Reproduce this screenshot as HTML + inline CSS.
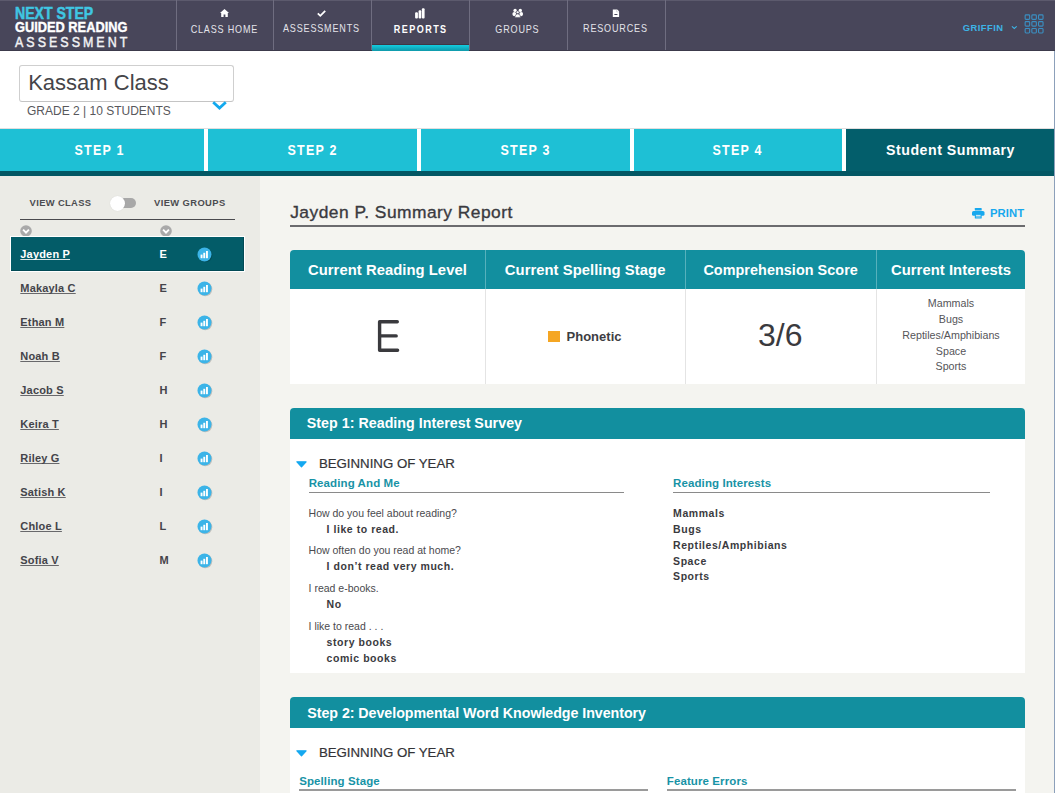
<!DOCTYPE html>
<html><head><meta charset="utf-8">
<style>
*{box-sizing:border-box;margin:0;padding:0}
html,body{width:1055px;height:793px;overflow:hidden;background:#f4f4f0;font-family:"Liberation Sans",sans-serif;color:#3b3b3f}
.a{position:absolute;white-space:nowrap}
svg{position:absolute;overflow:visible}
</style></head><body>
<div class="a" style="left:0px;top:0px;width:1055px;height:51px;background:#48465a;"></div>
<div class="a" style="left:0px;top:0px;width:1055px;height:1px;background:#5c5a6d;"></div>
<div class="a" style="left:15px;top:4.63px;font-size:16.2px;line-height:16.2px;font-weight:bold;color:#3fc6e2;transform:scaleX(0.87);transform-origin:left top;-webkit-text-stroke:0.5px #3fc6e2;">NEXT STEP</div>
<div class="a" style="left:15px;top:20.13px;font-size:14.9px;line-height:14.9px;font-weight:bold;color:#ffffff;transform:scaleX(0.86);transform-origin:left top;-webkit-text-stroke:0.4px #fff;">GUIDED READING</div>
<div class="a" style="left:15px;top:34.67px;font-size:14.5px;line-height:14.5px;font-weight:normal;color:#f2f2f4;letter-spacing:3.5px;transform:scaleX(0.86);transform-origin:left top;-webkit-text-stroke:0.45px #f2f2f4;">ASSESSMENT</div>
<div class="a" style="left:176px;top:0px;width:1px;height:51px;background:#6f6d80;"></div>
<div class="a" style="left:23.900000000000006px;width:400px;text-align:center;top:24.76px;font-size:10.4px;line-height:10.4px;font-weight:normal;color:#e4e4ea;letter-spacing:0.95px;text-indent:0.95px;transform:scaleX(0.87);transform-origin:center top;">CLASS HOME</div>
<div class="a" style="left:273px;top:0px;width:1px;height:51px;background:#6f6d80;"></div>
<div class="a" style="left:121.39999999999998px;width:400px;text-align:center;top:24.16px;font-size:10.4px;line-height:10.4px;font-weight:normal;color:#e4e4ea;letter-spacing:0.95px;text-indent:0.95px;transform:scaleX(0.87);transform-origin:center top;">ASSESSMENTS</div>
<div class="a" style="left:371px;top:0px;width:1px;height:51px;background:#6f6d80;"></div>
<div class="a" style="left:219.7px;width:400px;text-align:center;top:24.76px;font-size:10.4px;line-height:10.4px;font-weight:bold;color:#ffffff;letter-spacing:1.65px;text-indent:1.65px;transform:scaleX(0.87);transform-origin:center top;">REPORTS</div>
<div class="a" style="left:469px;top:0px;width:1px;height:51px;background:#6f6d80;"></div>
<div class="a" style="left:317.4px;width:400px;text-align:center;top:24.76px;font-size:10.4px;line-height:10.4px;font-weight:normal;color:#e4e4ea;letter-spacing:0.95px;text-indent:0.95px;transform:scaleX(0.87);transform-origin:center top;">GROUPS</div>
<div class="a" style="left:567px;top:0px;width:1px;height:51px;background:#6f6d80;"></div>
<div class="a" style="left:415.4px;width:400px;text-align:center;top:24.16px;font-size:10.4px;line-height:10.4px;font-weight:normal;color:#e4e4ea;letter-spacing:0.95px;text-indent:0.95px;transform:scaleX(0.87);transform-origin:center top;">RESOURCES</div>
<div class="a" style="left:665px;top:0px;width:1px;height:51px;background:#6f6d80;"></div>
<div class="a" style="left:0px;top:50px;width:1055px;height:1px;background:#3c3a4b;"></div>
<div class="a" style="left:372px;top:44px;width:97px;height:1px;background:#3e3744;"></div>
<div class="a" style="left:372px;top:45px;width:97px;height:6.5px;background:linear-gradient(#14cde0,#10a6b8 60%,#0e93a4);"></div>
<svg style="left:220px;top:9px" width="9" height="8" viewBox="0 0 9 8"><path d="M4.5 0 L9 4 L7.8 4 L7.8 8 L5.4 8 L5.4 5.6 L3.6 5.6 L3.6 8 L1.2 8 L1.2 4 L0 4 Z" fill="#fff"/></svg>
<svg style="left:317px;top:10px" width="9" height="7" viewBox="0 0 9 7"><path d="M0.8 3.4 L3.3 5.8 L8.2 0.8" stroke="#fff" stroke-width="1.8" fill="none"/></svg>
<svg style="left:415px;top:7.5px" width="10" height="11" viewBox="0 0 10 11"><rect x="0.1" y="4.3" width="2.8" height="6.3" rx="1" fill="#fff"/><rect x="3.6" y="2.2" width="2.7" height="8.4" rx="1" fill="#fff"/><rect x="6.9" y="0.2" width="2.7" height="10.4" rx="1" fill="#fff"/></svg>
<svg style="left:510px;top:7px" width="15" height="12" viewBox="510 7 15 12"><circle cx="515.1" cy="10.4" r="1.7" fill="#fff"/><circle cx="520.3" cy="10.4" r="1.7" fill="#fff"/><ellipse cx="514.3" cy="14.1" rx="1.9" ry="2.1" fill="#fff"/><ellipse cx="521.2" cy="14.1" rx="1.9" ry="2.1" fill="#fff"/><circle cx="517.7" cy="12.3" r="1.4" fill="#fff" stroke="#48465a" stroke-width="0.5"/><path d="M514.9 17.4 Q514.9 13.9 517.7 13.9 Q520.5 13.9 520.5 17.4 Z" fill="#fff" stroke="#48465a" stroke-width="0.5"/></svg>
<svg style="left:612px;top:9px" width="8" height="9" viewBox="612 9 8 9"><path d="M612.8 9.4 H617.2 L619.1 11.3 V17.1 H612.8 Z" fill="#fff"/><path d="M616.6 9.6 V11.9 H618.9" stroke="#b9b8c2" stroke-width="0.5" fill="none"/><rect x="614.2" y="14" width="3.4" height="0.9" rx="0.4" fill="#48465a"/></svg>
<div class="a" style="left:962.7px;top:22.71px;font-size:9.4px;line-height:9.4px;font-weight:bold;color:#3db3e6;letter-spacing:0.48px;">GRIFFIN</div>
<svg style="left:1010px;top:24px" width="9" height="7" viewBox="1010 24 9 7"><path d="M1011.9 26.4 L1014.3 28.5 L1016.7 26.4" stroke="#3db3e6" stroke-width="1.1" fill="none"/></svg>
<svg style="left:1020px;top:10px" width="30" height="30" viewBox="1020 10 30 30"><rect x="1025.15" y="14.85" width="4.5" height="4.5" rx="0.9" fill="none" stroke="#3a8fc2" stroke-width="1.1"/><rect x="1031.85" y="14.85" width="4.5" height="4.5" rx="0.9" fill="none" stroke="#3a8fc2" stroke-width="1.1"/><rect x="1038.55" y="14.85" width="4.5" height="4.5" rx="0.9" fill="none" stroke="#3a8fc2" stroke-width="1.1"/><rect x="1025.15" y="21.65" width="4.5" height="4.5" rx="0.9" fill="none" stroke="#3a8fc2" stroke-width="1.1"/><rect x="1031.85" y="21.65" width="4.5" height="4.5" rx="0.9" fill="none" stroke="#3a8fc2" stroke-width="1.1"/><rect x="1038.55" y="21.65" width="4.5" height="4.5" rx="0.9" fill="none" stroke="#3a8fc2" stroke-width="1.1"/><rect x="1025.15" y="28.45" width="4.5" height="4.5" rx="0.9" fill="none" stroke="#3a8fc2" stroke-width="1.1"/><rect x="1031.85" y="28.45" width="4.5" height="4.5" rx="0.9" fill="none" stroke="#3a8fc2" stroke-width="1.1"/><rect x="1038.55" y="28.45" width="4.5" height="4.5" rx="0.9" fill="none" stroke="#3a8fc2" stroke-width="1.1"/></svg>
<div class="a" style="left:0px;top:51px;width:1055px;height:77px;background:#ffffff;"></div>
<div class="a" style="left:0px;top:128px;width:1055px;height:1px;background:#e2dede;"></div>
<div class="a" style="left:19px;top:65px;width:215px;height:36.8px;background:#ffffff;border:1px solid #cfcfcf;border-bottom-color:#c4c4c4;border-radius:3px;"></div>
<div class="a" style="left:28.2px;top:72.00px;font-size:22px;line-height:22px;font-weight:normal;color:#454549;">Kassam Class</div>
<div class="a" style="left:27px;top:105.10px;font-size:12px;line-height:12px;font-weight:normal;color:#58585c;">GRADE 2 | 10 STUDENTS</div>
<svg style="left:212px;top:101px" width="15" height="9" viewBox="0 0 15 9"><path d="M1.2 1.2 L7.5 7 L13.8 1.2" stroke="#12a9ee" stroke-width="2.8" fill="none"/></svg>
<div class="a" style="left:0px;top:129px;width:1055px;height:47px;background:#035764;"></div>
<div class="a" style="left:0px;top:129px;width:204px;height:42px;background:#1ec0d5;"></div>
<div class="a" style="left:-101.0px;width:400px;text-align:center;top:143.43px;font-size:14.2px;line-height:14.2px;font-weight:bold;color:#ffffff;letter-spacing:1.4px;text-indent:1.4px;transform:scaleX(0.88);transform-origin:center top;">STEP 1</div>
<div class="a" style="left:208px;top:129px;width:209px;height:42px;background:#1ec0d5;"></div>
<div class="a" style="left:111.80000000000001px;width:400px;text-align:center;top:143.43px;font-size:14.2px;line-height:14.2px;font-weight:bold;color:#ffffff;letter-spacing:1.4px;text-indent:1.4px;transform:scaleX(0.88);transform-origin:center top;">STEP 2</div>
<div class="a" style="left:421px;top:129px;width:209px;height:42px;background:#1ec0d5;"></div>
<div class="a" style="left:324.6px;width:400px;text-align:center;top:143.43px;font-size:14.2px;line-height:14.2px;font-weight:bold;color:#ffffff;letter-spacing:1.4px;text-indent:1.4px;transform:scaleX(0.88);transform-origin:center top;">STEP 3</div>
<div class="a" style="left:633px;top:129px;width:209px;height:42px;background:#1ec0d5;"></div>
<div class="a" style="left:537.4px;width:400px;text-align:center;top:143.43px;font-size:14.2px;line-height:14.2px;font-weight:bold;color:#ffffff;letter-spacing:1.4px;text-indent:1.4px;transform:scaleX(0.88);transform-origin:center top;">STEP 4</div>
<div class="a" style="left:846px;top:129px;width:209px;height:42px;background:#035e6b;"></div>
<div class="a" style="left:750.3px;width:400px;text-align:center;top:143.43px;font-size:14.2px;line-height:14.2px;font-weight:bold;color:#ffffff;letter-spacing:0.5px;text-indent:0.5px;">Student Summary</div>
<div class="a" style="left:204px;top:129px;width:4px;height:42px;background:#ffffff;"></div>
<div class="a" style="left:417px;top:129px;width:4px;height:42px;background:#ffffff;"></div>
<div class="a" style="left:630px;top:129px;width:4px;height:42px;background:#ffffff;"></div>
<div class="a" style="left:842px;top:129px;width:4px;height:42px;background:#ffffff;"></div>
<div class="a" style="left:0px;top:176px;width:260px;height:617px;background:#ebebe6;"></div>
<div class="a" style="left:29.6px;top:198.01px;font-size:9.4px;line-height:9.4px;font-weight:bold;color:#4b4b50;letter-spacing:0.35px;">VIEW CLASS</div>
<div class="a" style="left:154px;top:198.01px;font-size:9.4px;line-height:9.4px;font-weight:bold;color:#4b4b50;letter-spacing:0.4px;">VIEW GROUPS</div>
<div class="a" style="left:111px;top:198px;width:25px;height:10px;background:#a8a8a8;border-radius:5px;"></div>
<div class="a" style="left:109.5px;top:195.5px;width:15px;height:15px;background:#ffffff;border-radius:50%;box-shadow:0 0 1px rgba(0,0,0,.15);"></div>
<div class="a" style="left:20px;top:219px;width:215px;height:1px;background:#4a4a4e;"></div>
<svg style="left:20px;top:225px" width="12" height="12" viewBox="0 0 12 12"><circle cx="6" cy="6" r="5.8" fill="#a9a9a9"/><path d="M3.1 4.7 L6 7.6 L8.9 4.7" stroke="#fff" stroke-width="1.9" fill="none"/></svg>
<svg style="left:159.5px;top:225px" width="12" height="12" viewBox="0 0 12 12"><circle cx="6" cy="6" r="5.8" fill="#a9a9a9"/><path d="M3.1 4.7 L6 7.6 L8.9 4.7" stroke="#fff" stroke-width="1.9" fill="none"/></svg>
<div class="a" style="left:10px;top:236px;width:235px;height:36px;background:#ffffff;"></div>
<div class="a" style="left:11px;top:237px;width:233px;height:34px;background:#035c68;box-shadow:inset -1px -1px 0 #024a55;"></div>
<div class="a" style="left:20.3px;top:248.55px;font-size:11px;line-height:11px;font-weight:bold;color:#ffffff;letter-spacing:0.18px;text-decoration:underline;text-underline-offset:1px;text-decoration-thickness:1px;text-decoration-skip-ink:none;text-decoration-color:rgba(255,255,255,.85);">Jayden P</div>
<div class="a" style="left:159.5px;top:248.55px;font-size:11px;line-height:11px;font-weight:bold;color:#ffffff;">E</div>
<svg style="left:196.5px;top:246.8px" width="16" height="16" viewBox="0 0 16 16"><circle cx="8.3" cy="8.3" r="7" fill="rgba(0,0,0,0.18)"/><circle cx="7.5" cy="7.5" r="7" fill="#3cb4e8"/><rect x="3.6" y="7.6" width="1.9" height="3.6" fill="#fff"/><rect x="6.3" y="5.8" width="1.9" height="5.4" fill="#fff"/><rect x="9" y="4" width="1.9" height="7.2" fill="#fff"/></svg>
<div class="a" style="left:20.3px;top:282.55px;font-size:11px;line-height:11px;font-weight:bold;color:#44444a;letter-spacing:0.18px;text-decoration:underline;text-underline-offset:1px;text-decoration-thickness:1px;text-decoration-skip-ink:none;text-decoration-color:rgba(60,60,66,.75);">Makayla C</div>
<div class="a" style="left:159.5px;top:282.55px;font-size:11px;line-height:11px;font-weight:bold;color:#44444a;">E</div>
<svg style="left:196.5px;top:280.8px" width="16" height="16" viewBox="0 0 16 16"><circle cx="8.3" cy="8.3" r="7" fill="rgba(0,0,0,0.18)"/><circle cx="7.5" cy="7.5" r="7" fill="#3cb4e8"/><rect x="3.6" y="7.6" width="1.9" height="3.6" fill="#fff"/><rect x="6.3" y="5.8" width="1.9" height="5.4" fill="#fff"/><rect x="9" y="4" width="1.9" height="7.2" fill="#fff"/></svg>
<div class="a" style="left:20.3px;top:316.55px;font-size:11px;line-height:11px;font-weight:bold;color:#44444a;letter-spacing:0.18px;text-decoration:underline;text-underline-offset:1px;text-decoration-thickness:1px;text-decoration-skip-ink:none;text-decoration-color:rgba(60,60,66,.75);">Ethan M</div>
<div class="a" style="left:159.5px;top:316.55px;font-size:11px;line-height:11px;font-weight:bold;color:#44444a;">F</div>
<svg style="left:196.5px;top:314.8px" width="16" height="16" viewBox="0 0 16 16"><circle cx="8.3" cy="8.3" r="7" fill="rgba(0,0,0,0.18)"/><circle cx="7.5" cy="7.5" r="7" fill="#3cb4e8"/><rect x="3.6" y="7.6" width="1.9" height="3.6" fill="#fff"/><rect x="6.3" y="5.8" width="1.9" height="5.4" fill="#fff"/><rect x="9" y="4" width="1.9" height="7.2" fill="#fff"/></svg>
<div class="a" style="left:20.3px;top:350.55px;font-size:11px;line-height:11px;font-weight:bold;color:#44444a;letter-spacing:0.18px;text-decoration:underline;text-underline-offset:1px;text-decoration-thickness:1px;text-decoration-skip-ink:none;text-decoration-color:rgba(60,60,66,.75);">Noah B</div>
<div class="a" style="left:159.5px;top:350.55px;font-size:11px;line-height:11px;font-weight:bold;color:#44444a;">F</div>
<svg style="left:196.5px;top:348.8px" width="16" height="16" viewBox="0 0 16 16"><circle cx="8.3" cy="8.3" r="7" fill="rgba(0,0,0,0.18)"/><circle cx="7.5" cy="7.5" r="7" fill="#3cb4e8"/><rect x="3.6" y="7.6" width="1.9" height="3.6" fill="#fff"/><rect x="6.3" y="5.8" width="1.9" height="5.4" fill="#fff"/><rect x="9" y="4" width="1.9" height="7.2" fill="#fff"/></svg>
<div class="a" style="left:20.3px;top:384.55px;font-size:11px;line-height:11px;font-weight:bold;color:#44444a;letter-spacing:0.18px;text-decoration:underline;text-underline-offset:1px;text-decoration-thickness:1px;text-decoration-skip-ink:none;text-decoration-color:rgba(60,60,66,.75);">Jacob S</div>
<div class="a" style="left:159.5px;top:384.55px;font-size:11px;line-height:11px;font-weight:bold;color:#44444a;">H</div>
<svg style="left:196.5px;top:382.8px" width="16" height="16" viewBox="0 0 16 16"><circle cx="8.3" cy="8.3" r="7" fill="rgba(0,0,0,0.18)"/><circle cx="7.5" cy="7.5" r="7" fill="#3cb4e8"/><rect x="3.6" y="7.6" width="1.9" height="3.6" fill="#fff"/><rect x="6.3" y="5.8" width="1.9" height="5.4" fill="#fff"/><rect x="9" y="4" width="1.9" height="7.2" fill="#fff"/></svg>
<div class="a" style="left:20.3px;top:418.55px;font-size:11px;line-height:11px;font-weight:bold;color:#44444a;letter-spacing:0.18px;text-decoration:underline;text-underline-offset:1px;text-decoration-thickness:1px;text-decoration-skip-ink:none;text-decoration-color:rgba(60,60,66,.75);">Keira T</div>
<div class="a" style="left:159.5px;top:418.55px;font-size:11px;line-height:11px;font-weight:bold;color:#44444a;">H</div>
<svg style="left:196.5px;top:416.8px" width="16" height="16" viewBox="0 0 16 16"><circle cx="8.3" cy="8.3" r="7" fill="rgba(0,0,0,0.18)"/><circle cx="7.5" cy="7.5" r="7" fill="#3cb4e8"/><rect x="3.6" y="7.6" width="1.9" height="3.6" fill="#fff"/><rect x="6.3" y="5.8" width="1.9" height="5.4" fill="#fff"/><rect x="9" y="4" width="1.9" height="7.2" fill="#fff"/></svg>
<div class="a" style="left:20.3px;top:452.55px;font-size:11px;line-height:11px;font-weight:bold;color:#44444a;letter-spacing:0.18px;text-decoration:underline;text-underline-offset:1px;text-decoration-thickness:1px;text-decoration-skip-ink:none;text-decoration-color:rgba(60,60,66,.75);">Riley G</div>
<div class="a" style="left:159.5px;top:452.55px;font-size:11px;line-height:11px;font-weight:bold;color:#44444a;">I</div>
<svg style="left:196.5px;top:450.8px" width="16" height="16" viewBox="0 0 16 16"><circle cx="8.3" cy="8.3" r="7" fill="rgba(0,0,0,0.18)"/><circle cx="7.5" cy="7.5" r="7" fill="#3cb4e8"/><rect x="3.6" y="7.6" width="1.9" height="3.6" fill="#fff"/><rect x="6.3" y="5.8" width="1.9" height="5.4" fill="#fff"/><rect x="9" y="4" width="1.9" height="7.2" fill="#fff"/></svg>
<div class="a" style="left:20.3px;top:486.55px;font-size:11px;line-height:11px;font-weight:bold;color:#44444a;letter-spacing:0.18px;text-decoration:underline;text-underline-offset:1px;text-decoration-thickness:1px;text-decoration-skip-ink:none;text-decoration-color:rgba(60,60,66,.75);">Satish K</div>
<div class="a" style="left:159.5px;top:486.55px;font-size:11px;line-height:11px;font-weight:bold;color:#44444a;">I</div>
<svg style="left:196.5px;top:484.8px" width="16" height="16" viewBox="0 0 16 16"><circle cx="8.3" cy="8.3" r="7" fill="rgba(0,0,0,0.18)"/><circle cx="7.5" cy="7.5" r="7" fill="#3cb4e8"/><rect x="3.6" y="7.6" width="1.9" height="3.6" fill="#fff"/><rect x="6.3" y="5.8" width="1.9" height="5.4" fill="#fff"/><rect x="9" y="4" width="1.9" height="7.2" fill="#fff"/></svg>
<div class="a" style="left:20.3px;top:520.55px;font-size:11px;line-height:11px;font-weight:bold;color:#44444a;letter-spacing:0.18px;text-decoration:underline;text-underline-offset:1px;text-decoration-thickness:1px;text-decoration-skip-ink:none;text-decoration-color:rgba(60,60,66,.75);">Chloe L</div>
<div class="a" style="left:159.5px;top:520.55px;font-size:11px;line-height:11px;font-weight:bold;color:#44444a;">L</div>
<svg style="left:196.5px;top:518.8px" width="16" height="16" viewBox="0 0 16 16"><circle cx="8.3" cy="8.3" r="7" fill="rgba(0,0,0,0.18)"/><circle cx="7.5" cy="7.5" r="7" fill="#3cb4e8"/><rect x="3.6" y="7.6" width="1.9" height="3.6" fill="#fff"/><rect x="6.3" y="5.8" width="1.9" height="5.4" fill="#fff"/><rect x="9" y="4" width="1.9" height="7.2" fill="#fff"/></svg>
<div class="a" style="left:20.3px;top:554.55px;font-size:11px;line-height:11px;font-weight:bold;color:#44444a;letter-spacing:0.18px;text-decoration:underline;text-underline-offset:1px;text-decoration-thickness:1px;text-decoration-skip-ink:none;text-decoration-color:rgba(60,60,66,.75);">Sofia V</div>
<div class="a" style="left:159.5px;top:554.55px;font-size:11px;line-height:11px;font-weight:bold;color:#44444a;">M</div>
<svg style="left:196.5px;top:552.8px" width="16" height="16" viewBox="0 0 16 16"><circle cx="8.3" cy="8.3" r="7" fill="rgba(0,0,0,0.18)"/><circle cx="7.5" cy="7.5" r="7" fill="#3cb4e8"/><rect x="3.6" y="7.6" width="1.9" height="3.6" fill="#fff"/><rect x="6.3" y="5.8" width="1.9" height="5.4" fill="#fff"/><rect x="9" y="4" width="1.9" height="7.2" fill="#fff"/></svg>
<div class="a" style="left:1054px;top:51px;width:1px;height:742px;background:#8ca0ba;"></div>
<div class="a" style="left:290.2px;top:203.81px;font-size:17.4px;line-height:17.4px;font-weight:normal;color:#3a3a3f;letter-spacing:0.47px;-webkit-text-stroke:0.35px #3a3a3f;">Jayden P. Summary Report</div>
<div class="a" style="left:290px;top:225px;width:735px;height:2px;background:#6b6b6e;"></div>
<div class="a" style="left:989.9px;top:207.90px;font-size:11.3px;line-height:11.3px;font-weight:bold;color:#17a8ee;letter-spacing:0.1px;">PRINT</div>
<svg style="left:971.7px;top:207.5px" width="12.5" height="10.6" viewBox="0 0 12.5 10.6"><rect x="2.8" y="0" width="6.9" height="2.5" rx="0.5" fill="#17a8ee"/><rect x="0" y="3" width="12.5" height="4.8" rx="1.6" fill="#17a8ee"/><rect x="2.8" y="5.6" width="6.9" height="5" rx="0.6" fill="#17a8ee"/><rect x="3.9" y="6.9" width="4.7" height="0.9" fill="#f4f4f0"/><rect x="3.9" y="8.6" width="4.7" height="0.7" fill="#f4f4f0"/></svg>
<div class="a" style="left:290px;top:250px;width:735px;height:134px;background:#ffffff;border-radius:4px 4px 0 0;"></div>
<div class="a" style="left:290px;top:250px;width:735px;height:39px;background:#128f9f;border-radius:4px 4px 0 0;"></div>
<div class="a" style="left:485px;top:250px;width:1px;height:39px;background:#57b1bc;"></div>
<div class="a" style="left:485px;top:289px;width:1px;height:95px;background:#e4e4e4;"></div>
<div class="a" style="left:685px;top:250px;width:1px;height:39px;background:#57b1bc;"></div>
<div class="a" style="left:685px;top:289px;width:1px;height:95px;background:#e4e4e4;"></div>
<div class="a" style="left:876px;top:250px;width:1px;height:39px;background:#57b1bc;"></div>
<div class="a" style="left:876px;top:289px;width:1px;height:95px;background:#e4e4e4;"></div>
<div class="a" style="left:187.39999999999998px;width:400px;text-align:center;top:262.62px;font-size:14.8px;line-height:14.8px;font-weight:bold;color:#ffffff;letter-spacing:0.05px;text-indent:0.05px;">Current Reading Level</div>
<div class="a" style="left:385.1px;width:400px;text-align:center;top:262.62px;font-size:14.8px;line-height:14.8px;font-weight:bold;color:#ffffff;letter-spacing:0.05px;text-indent:0.05px;">Current Spelling Stage</div>
<div class="a" style="left:580.6px;width:400px;text-align:center;top:262.96px;font-size:14.4px;line-height:14.4px;font-weight:bold;color:#ffffff;letter-spacing:0.05px;text-indent:0.05px;">Comprehension Score</div>
<div class="a" style="left:751.0px;width:400px;text-align:center;top:262.62px;font-size:14.8px;line-height:14.8px;font-weight:bold;color:#ffffff;letter-spacing:0.05px;text-indent:0.05px;">Current Interests</div>
<svg style="left:370px;top:315px" width="40" height="42" viewBox="370 315 40 42"><path d="M397.3 321.8 H379.6 V350.2 H397.6 M379.6 335.9 H396.2" stroke="#3a3a3e" stroke-width="3.4" fill="none" stroke-linecap="round" stroke-linejoin="round"/></svg>
<div class="a" style="left:548px;top:331px;width:11.5px;height:11.2px;background:#f5a623;"></div>
<div class="a" style="left:566.5px;top:330.05px;font-size:13px;line-height:13px;font-weight:bold;color:#3d3d42;letter-spacing:0.02px;">Phonetic</div>
<div class="a" style="left:580.3px;width:400px;text-align:center;top:319.20px;font-size:32px;line-height:32px;font-weight:normal;color:#3a3a3e;">3/6</div>
<div class="a" style="left:751.0px;width:400px;text-align:center;top:298.00px;font-size:10.7px;line-height:10.7px;font-weight:normal;color:#555559;">Mammals</div>
<div class="a" style="left:751.0px;width:400px;text-align:center;top:313.86px;font-size:10.7px;line-height:10.7px;font-weight:normal;color:#555559;">Bugs</div>
<div class="a" style="left:751.0px;width:400px;text-align:center;top:329.71px;font-size:10.7px;line-height:10.7px;font-weight:normal;color:#555559;">Reptiles/Amphibians</div>
<div class="a" style="left:751.0px;width:400px;text-align:center;top:345.56px;font-size:10.7px;line-height:10.7px;font-weight:normal;color:#555559;">Space</div>
<div class="a" style="left:751.0px;width:400px;text-align:center;top:361.40px;font-size:10.7px;line-height:10.7px;font-weight:normal;color:#555559;">Sports</div>
<div class="a" style="left:290px;top:408px;width:735px;height:265px;background:#ffffff;border-radius:4px 4px 0 0;"></div>
<div class="a" style="left:290px;top:408px;width:735px;height:31px;background:#128f9f;border-radius:4px 4px 0 0;"></div>
<div class="a" style="left:306.8px;top:416.29px;font-size:14.25px;line-height:14.25px;font-weight:bold;color:#ffffff;letter-spacing:0.02px;">Step 1: Reading Interest Survey</div>
<svg style="left:296px;top:460.5px" width="12" height="8" viewBox="0 0 12 8"><path d="M0.9 0.8 L10.1 0.8 L5.5 5.9 Z" fill="#14a8f0" stroke="#14a8f0" stroke-width="1.2" stroke-linejoin="round"/></svg>
<div class="a" style="left:318.9px;top:456.94px;font-size:13.25px;line-height:13.25px;font-weight:normal;color:#333337;-webkit-text-stroke:0.2px #333337;">BEGINNING OF YEAR</div>
<div class="a" style="left:308.7px;top:478.43px;font-size:11.5px;line-height:11.5px;font-weight:bold;color:#1893a6;letter-spacing:0.1px;">Reading And Me</div>
<div class="a" style="left:308.7px;top:492px;width:315.5px;height:1px;background:#8a8a8a;"></div>
<div class="a" style="left:673.1px;top:478.23px;font-size:11.5px;line-height:11.5px;font-weight:bold;color:#1893a6;letter-spacing:0.1px;">Reading Interests</div>
<div class="a" style="left:673px;top:491.5px;width:316.5px;height:1px;background:#8a8a8a;"></div>
<div class="a" style="left:308.6px;top:508.07px;font-size:10.5px;line-height:10.5px;font-weight:normal;color:#4a4a4e;">How do you feel about reading?</div>
<div class="a" style="left:326.6px;top:523.88px;font-size:10.5px;line-height:10.5px;font-weight:bold;color:#3a3a3e;letter-spacing:0.55px;">I like to read.</div>
<div class="a" style="left:308.6px;top:545.38px;font-size:10.5px;line-height:10.5px;font-weight:normal;color:#4a4a4e;">How often do you read at home?</div>
<div class="a" style="left:326.6px;top:561.08px;font-size:10.5px;line-height:10.5px;font-weight:bold;color:#3a3a3e;letter-spacing:0.55px;">I don’t read very much.</div>
<div class="a" style="left:308.6px;top:583.18px;font-size:10.5px;line-height:10.5px;font-weight:normal;color:#4a4a4e;">I read e-books.</div>
<div class="a" style="left:326.6px;top:598.88px;font-size:10.5px;line-height:10.5px;font-weight:bold;color:#3a3a3e;letter-spacing:0.55px;">No</div>
<div class="a" style="left:308.6px;top:621.08px;font-size:10.5px;line-height:10.5px;font-weight:normal;color:#4a4a4e;">I like to read . . .</div>
<div class="a" style="left:326.6px;top:637.48px;font-size:10.5px;line-height:10.5px;font-weight:bold;color:#3a3a3e;letter-spacing:0.55px;">story books</div>
<div class="a" style="left:326.6px;top:653.48px;font-size:10.5px;line-height:10.5px;font-weight:bold;color:#3a3a3e;letter-spacing:0.55px;">comic books</div>
<div class="a" style="left:673.1px;top:507.87px;font-size:10.5px;line-height:10.5px;font-weight:bold;color:#3a3a3e;letter-spacing:0.55px;">Mammals</div>
<div class="a" style="left:673.1px;top:523.77px;font-size:10.5px;line-height:10.5px;font-weight:bold;color:#3a3a3e;letter-spacing:0.55px;">Bugs</div>
<div class="a" style="left:673.1px;top:539.67px;font-size:10.5px;line-height:10.5px;font-weight:bold;color:#3a3a3e;letter-spacing:0.55px;">Reptiles/Amphibians</div>
<div class="a" style="left:673.1px;top:555.58px;font-size:10.5px;line-height:10.5px;font-weight:bold;color:#3a3a3e;letter-spacing:0.55px;">Space</div>
<div class="a" style="left:673.1px;top:571.48px;font-size:10.5px;line-height:10.5px;font-weight:bold;color:#3a3a3e;letter-spacing:0.55px;">Sports</div>
<div class="a" style="left:290px;top:697px;width:735px;height:96px;background:#ffffff;border-radius:4px 4px 0 0;"></div>
<div class="a" style="left:290px;top:697px;width:735px;height:31px;background:#128f9f;border-radius:4px 4px 0 0;"></div>
<div class="a" style="left:307.3px;top:705.69px;font-size:14.25px;line-height:14.25px;font-weight:bold;color:#ffffff;letter-spacing:-0.05px;">Step 2: Developmental Word Knowledge Inventory</div>
<svg style="left:296px;top:749.5px" width="12" height="8" viewBox="0 0 12 8"><path d="M0.9 0.8 L10.1 0.8 L5.5 5.9 Z" fill="#14a8f0" stroke="#14a8f0" stroke-width="1.2" stroke-linejoin="round"/></svg>
<div class="a" style="left:318.9px;top:745.74px;font-size:13.25px;line-height:13.25px;font-weight:normal;color:#333337;-webkit-text-stroke:0.2px #333337;">BEGINNING OF YEAR</div>
<div class="a" style="left:299.2px;top:776.43px;font-size:11.5px;line-height:11.5px;font-weight:bold;color:#1893a6;letter-spacing:0.1px;">Spelling Stage</div>
<div class="a" style="left:299px;top:789px;width:349px;height:1.5px;background:#9a9a9a;"></div>
<div class="a" style="left:666.8px;top:776.02px;font-size:11.5px;line-height:11.5px;font-weight:bold;color:#1893a6;letter-spacing:0.1px;">Feature Errors</div>
<div class="a" style="left:667px;top:789px;width:349px;height:1.5px;background:#9a9a9a;"></div>
</body></html>
